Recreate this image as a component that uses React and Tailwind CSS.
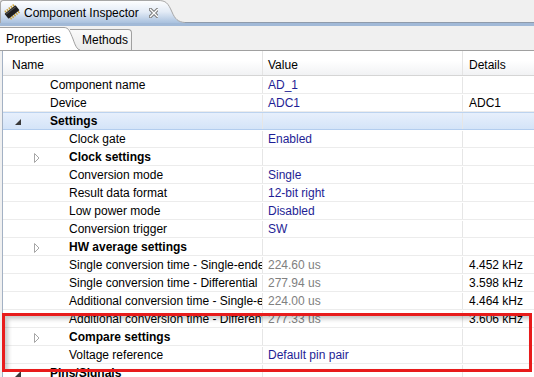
import React from 'react';

const rows = [
  { name: 'Component name', level: 0, value: 'AD_1' },
  { name: 'Device', level: 0, value: 'ADC1', details: 'ADC1' },
  { name: 'Settings', level: 0, bold: true, toggle: 'open', selected: true },
  { name: 'Clock gate', level: 1, value: 'Enabled' },
  { name: 'Clock settings', level: 1, bold: true, toggle: 'closed' },
  { name: 'Conversion mode', level: 1, value: 'Single' },
  { name: 'Result data format', level: 1, value: '12-bit right' },
  { name: 'Low power mode', level: 1, value: 'Disabled' },
  { name: 'Conversion trigger', level: 1, value: 'SW' },
  { name: 'HW average settings', level: 1, bold: true, toggle: 'closed' },
  { name: 'Single conversion time - Single-ended', level: 1, value: '224.60 us', muted: true, details: '4.452 kHz' },
  { name: 'Single conversion time - Differential', level: 1, value: '277.94 us', muted: true, details: '3.598 kHz' },
  { name: 'Additional conversion time - Single-ended', level: 1, value: '224.00 us', muted: true, details: '4.464 kHz' },
  { name: 'Additional conversion time - Differential', level: 1, value: '277.33 us', muted: true, details: '3.606 kHz' },
  { name: 'Compare settings', level: 1, bold: true, toggle: 'closed' },
  { name: 'Voltage reference', level: 1, value: 'Default pin pair' },
  { name: 'Pins/Signals', level: 0, bold: true, toggle: 'open' },
];

const ChipIcon = () => (
  <svg width="18" height="16" viewBox="0 0 18 16" className="shrink-0">
    <g transform="rotate(-38 9 8)">
      {[3.5, 6, 8.5, 11, 13.5].map((x) => (
        <g key={x}>
          <rect x={x} y="2.5" width="1.4" height="2.5" fill="#c9a23a" />
          <rect x={x} y="11" width="1.4" height="2.5" fill="#c9a23a" />
        </g>
      ))}
      <rect x="2" y="4.8" width="14" height="6.4" rx="0.6" fill="#1f1f1f" />
      <rect x="3" y="5.6" width="12" height="1" fill="#555" />
    </g>
  </svg>
);

const CloseX = () => (
  <svg width="10" height="10" viewBox="0 0 10 10" className="shrink-0">
    <path d="M1.5 1.5 L8.5 8.5 M8.5 1.5 L1.5 8.5" stroke="#7d7d7d" strokeWidth="3.4" strokeLinecap="square" />
    <path d="M1.5 1.5 L8.5 8.5 M8.5 1.5 L1.5 8.5" stroke="#ffffff" strokeWidth="1.3" strokeLinecap="square" />
  </svg>
);

const Toggle = ({ type }) => {
  if (type === 'open') {
    return (
      <svg width="6" height="6" viewBox="0 0 6 6" className="ml-[3px] mt-[2px]">
        <polygon points="6,0 6,6 0,6" fill="#3a3a3a" />
      </svg>
    );
  }
  if (type === 'closed') {
    return (
      <svg width="6" height="10" viewBox="0 0 6 10" className="ml-[3px] mt-[1px]">
        <polygon points="0.5,0.5 5,5 0.5,9.5" fill="#ffffff" stroke="#a6a6a6" strokeWidth="1" />
      </svg>
    );
  }
  return null;
};

const Row = ({ row }) => (
  <div
    className={
      'flex h-[18px] shrink-0 border-b pt-[1px] ' +
      (row.selected
        ? 'border-[#b3cdee] bg-gradient-to-b from-[#e8f0fc] to-[#d4e4f8] shadow-[inset_0_1px_0_#bcd3ef]'
        : 'border-[#ececec]')
    }
  >
    <div
      className={
        'flex w-[260px] shrink-0 items-center overflow-hidden whitespace-nowrap border-r border-[#e6e6e6] ' +
        (row.level === 0 ? 'pl-[9px]' : 'pl-[28px]')
      }
    >
      <div className="flex w-[38px] shrink-0 items-center">
        <Toggle type={row.toggle} />
      </div>
      <span className={row.bold ? 'font-bold text-black' : 'text-black'}>{row.name}</span>
    </div>
    <div className="flex w-[200px] shrink-0 items-center overflow-hidden whitespace-nowrap border-r border-[#e6e6e6] pl-[5px]">
      <span className={row.muted ? 'text-[#808080]' : 'text-[#1e1e95]'}>{row.value}</span>
    </div>
    <div className="flex flex-1 items-center overflow-hidden whitespace-nowrap pl-[6px] text-black">
      {row.details}
    </div>
  </div>
);

export default function App() {
  return (
    <div
      className="relative flex h-[377px] w-[534px] flex-col overflow-hidden bg-[#f0f0f0] text-[12px] leading-none text-black"
      style={{ fontFamily: '"Liberation Sans", Arial, sans-serif' }}
    >
      {/* view title tab */}
      <div className="flex h-[23px] shrink-0 items-stretch">
        <div className="flex w-[158px] shrink-0 items-center gap-[3px] whitespace-nowrap rounded-tl-[3px] border-l border-t border-[#a7a7a7] bg-gradient-to-b from-[#fdfeff] via-[#e3ebf6] to-[#a9c1de] pl-[2px]">
          <ChipIcon />
          <span className="mt-[1px]">Component Inspector</span>
          <div className="ml-[7px] mt-[1px]">
            <CloseX />
          </div>
        </div>
        <svg width="27" height="23" viewBox="0 0 27 23" className="shrink-0">
          <defs>
            <linearGradient id="tabg" x1="0" y1="0" x2="0" y2="1">
              <stop offset="0" stopColor="#fdfeff" />
              <stop offset="0.5" stopColor="#e3ebf6" />
              <stop offset="1" stopColor="#a9c1de" />
            </linearGradient>
          </defs>
          <path d="M0 0.5 C8 0.5 10 3 14 12 C17 19 20 22 27 22.5 L27 23 L0 23 Z" fill="url(#tabg)" />
          <path d="M0 0.5 C8 0.5 10 3 14 12 C17 19 20 22 27 22.5" fill="none" stroke="#a7a7a7" strokeWidth="1" />
        </svg>
        <div className="flex-1 border-b border-[#8f9bab]" />
      </div>
      <div className="h-[3px] shrink-0 bg-[#a1b9d7]" />

      {/* Properties / Methods tabs */}
      <div className="flex h-[25px] shrink-0 items-end border-b border-[#a0a0a0]">
        <div className="relative z-10 flex h-[23px] items-end">
          <div className="flex h-[23px] w-[64px] items-center border-t border-[#a0a0a0] bg-white pl-[6px]">
            Properties
          </div>
          <svg width="16" height="23" viewBox="0 0 16 23" className="shrink-0">
            <path d="M0 0.5 C5 0.5 6 5 9 12 C11 18 13 22.5 16 23 L0 23 Z" fill="#ffffff" />
            <path d="M0 0.5 C5 0.5 6 5 9 12 C11 18 13 22.5 16 23" fill="none" stroke="#a0a0a0" strokeWidth="1" />
          </svg>
        </div>
        <div className="-ml-[10px] flex h-[21px] w-[62px] items-center rounded-tr-[4px] border-r border-t border-[#a0a0a0] bg-gradient-to-b from-[#fafafa] to-[#ebebeb] pl-[12px]">
          Methods
        </div>
      </div>

      {/* property table */}
      <div className="ml-[2px] flex flex-1 flex-col border-l border-[#a3b1c4] bg-white">
        <div className="flex h-[25px] shrink-0 border-b border-[#d5d5d5] bg-gradient-to-b from-white from-40% to-[#f1f2f4]">
          <div className="flex w-[260px] shrink-0 items-center border-r border-[#e4e4e4] pl-[9px] pt-[3px]">Name</div>
          <div className="flex w-[200px] shrink-0 items-center border-r border-[#e4e4e4] pl-[5px] pt-[3px]">Value</div>
          <div className="flex flex-1 items-center pl-[6px] pt-[3px]">Details</div>
        </div>
        {rows.map((row) => (
          <Row key={row.name} row={row} />
        ))}
      </div>

      {/* annotation frame */}
      <div className="pointer-events-none absolute left-[2px] top-[313px] h-[59px] w-[530px] border-[3px] border-[#e81b1b] shadow-[inset_3px_3px_4px_rgba(0,0,0,0.22)]" />
    </div>
  );
}
